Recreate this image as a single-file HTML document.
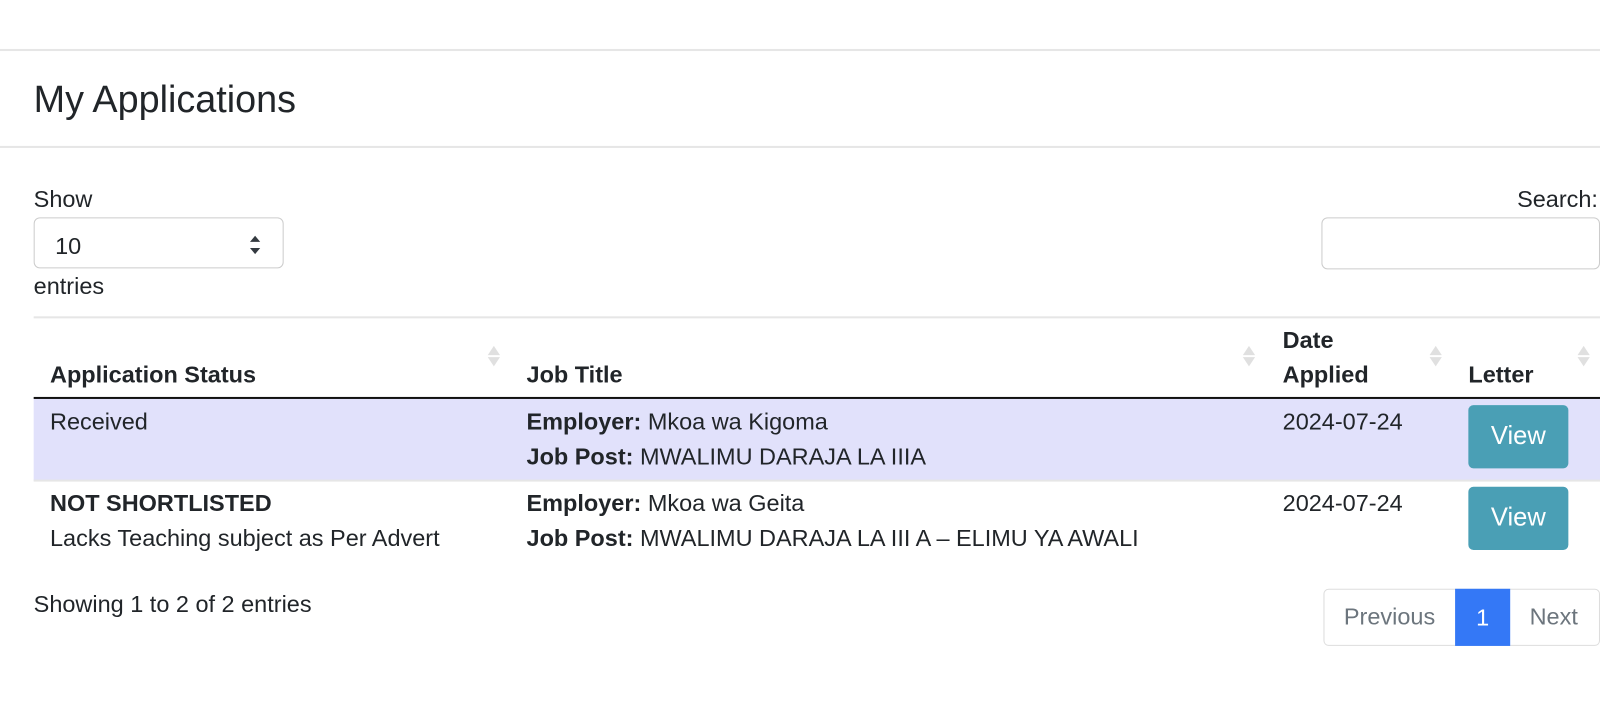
<!DOCTYPE html>
<html><head><meta charset="utf-8"><style>
*{margin:0;padding:0;box-sizing:border-box}
body{width:1600px;height:706px;background:#fff;overflow:hidden}
#w{position:absolute;left:0;top:0;width:1568px;height:692px;transform:scale(1.0204);transform-origin:0 0;font-family:"Liberation Sans",Arial,sans-serif;color:#212529;font-size:23px}
.a{position:absolute;white-space:nowrap;line-height:28px}
.hl{position:absolute;left:0;width:1568px;height:2px;background:#e6e6e6}
b{font-weight:bold}
.sort{position:absolute;width:14px;height:22px}
.btn{position:absolute;left:1439px;width:98px;height:62px;background:#4a9fb5;border-radius:5px;color:#fff;font-size:25px;text-align:center;line-height:60px}
</style></head><body><div id="w">
<div class="hl" style="top:48px"></div>
<div class="a" style="left:33px;top:76px;font-size:37px;line-height:44px">My Applications</div>
<div class="hl" style="top:143px"></div>
<div class="a" style="left:33px;top:181px">Show</div>
<div style="position:absolute;left:33px;top:213px;width:245px;height:50px;border:1px solid #ccc;border-radius:6px"></div>
<div class="a" style="left:54px;top:227px">10</div>
<svg style="position:absolute;left:243px;top:230px" width="14" height="20"><path d="M7 1L12 7H2Z M7 19L12 13H2Z" fill="#343a40"/></svg>
<div class="a" style="left:33px;top:266px">entries</div>
<div class="a" style="right:2px;top:181px">Search:</div>
<div style="position:absolute;left:1295px;top:213px;width:273px;height:51px;border:1px solid #ccc;border-radius:6px"></div>
<div style="position:absolute;left:33px;top:310px;width:1535px;height:2px;background:#e6e6e6"></div>
<div class="a" style="left:49px;top:353px"><b>Application Status</b></div>
<div class="a" style="left:516px;top:353px"><b>Job Title</b></div>
<div class="a" style="left:1257px;top:319px"><b>Date</b></div>
<div class="a" style="left:1257px;top:353px"><b>Applied</b></div>
<div class="a" style="left:1439px;top:353px"><b>Letter</b></div>
<svg class="sort" style="left:477px;top:338px"><path d="M7 1L13 10H1Z M7 21L13 12H1Z" fill="#e0e0e0"/></svg>
<svg class="sort" style="left:1217px;top:338px"><path d="M7 1L13 10H1Z M7 21L13 12H1Z" fill="#e0e0e0"/></svg>
<svg class="sort" style="left:1400px;top:338px"><path d="M7 1L13 10H1Z M7 21L13 12H1Z" fill="#e0e0e0"/></svg>
<svg class="sort" style="left:1545px;top:338px"><path d="M7 1L13 10H1Z M7 21L13 12H1Z" fill="#e0e0e0"/></svg>
<div style="position:absolute;left:33px;top:389px;width:1535px;height:2px;background:#111"></div>
<div style="position:absolute;left:33px;top:391px;width:1535px;height:80px;background:#e1e1fb"></div>
<div style="position:absolute;left:33px;top:470px;width:1535px;height:2px;background:#e6e6e6"></div>
<div class="a" style="left:49px;top:399px">Received</div>
<div class="a" style="left:516px;top:399px"><b>Employer:</b> Mkoa wa Kigoma</div>
<div class="a" style="left:516px;top:433px"><b>Job Post:</b> MWALIMU DARAJA LA IIIA</div>
<div class="a" style="left:1257px;top:399px">2024-07-24</div>
<div class="btn" style="top:397px">View</div>
<div class="a" style="left:49px;top:479px"><b>NOT SHORTLISTED</b></div>
<div class="a" style="left:49px;top:513px">Lacks Teaching subject as Per Advert</div>
<div class="a" style="left:516px;top:479px"><b>Employer:</b> Mkoa wa Geita</div>
<div class="a" style="left:516px;top:513px"><b>Job Post:</b> MWALIMU DARAJA LA III A – ELIMU YA AWALI</div>
<div class="a" style="left:1257px;top:479px">2024-07-24</div>
<div class="btn" style="top:477px">View</div>
<div class="a" style="left:33px;top:578px">Showing 1 to 2 of 2 entries</div>
<div style="position:absolute;left:1297px;top:577px;width:271px;height:56px;border:1px solid #ddd;border-radius:5px"></div>
<div class="a" style="left:1317px;top:590px;color:#6c757d">Previous</div>
<div style="position:absolute;left:1426px;top:577px;width:54px;height:56px;background:#3478f6;color:#fff;text-align:center;line-height:56px">1</div>
<div class="a" style="left:1499px;top:590px;color:#6c757d">Next</div>
</div></body></html>
